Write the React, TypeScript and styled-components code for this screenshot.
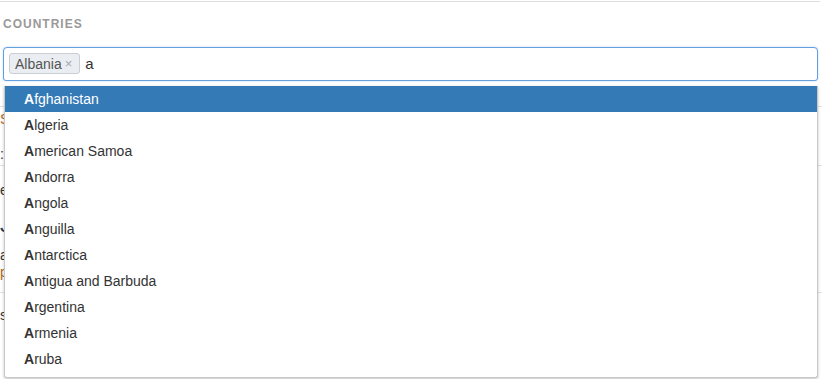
import React from "react";
import styled, { createGlobalStyle } from "styled-components";

const Global = createGlobalStyle`
  html, body { margin: 0; padding: 0; background: #fff; }
  body { font-family: "Liberation Sans", Arial, sans-serif; color: #333; overflow: hidden; }
`;

const Page = styled.div`
  width: 822px;
  height: 379px;
  overflow: hidden;
  position: relative;
`;

const TopRule = styled.div`
  height: 1px;
  margin-top: 1px;
  background: #dedede;
  margin-right: 2px;
`;

const Section = styled.section`
  padding: 0 4px 0 3px;
`;

const Label = styled.div`
  margin-top: 14px;
  font-size: 12px;
  line-height: 16px;
  font-weight: 700;
  letter-spacing: 1px;
  color: #999;
  text-transform: uppercase;
`;

const SelectWrap = styled.div`
  position: relative;
  margin-top: 15px;
`;

const SelectBox = styled.div`
  box-sizing: border-box;
  height: 34px;
  border: 1px solid #64a0dc;
  border-radius: 4px 4px 3px 3px;
  box-shadow: 0 0 2px rgba(88, 151, 251, 0.45);
  display: flex;
  align-items: flex-start;
  gap: 5px;
  padding: 5px 5px 0 5px;
  background: #fff;
`;

const Tag = styled.span`
  box-sizing: border-box;
  height: 21px;
  display: inline-flex;
  align-items: center;
  padding: 0 7px 0 5px;
  background: #eaedf1;
  border: 1px solid #c9ced5;
  border-radius: 3px;
  font-size: 14px;
  color: #555;
`;

const TagRemove = styled.span`
  margin-left: 3px;
  color: #a3a9b1;
  font-size: 13px;
`;

const Typed = styled.span`
  font-size: 15px;
  line-height: 21px;
  color: #333;
`;

const Dropdown = styled.ul`
  position: absolute;
  top: 39px;
  left: 1px;
  right: 0;
  height: 291px;
  margin: 0;
  padding: 0;
  list-style: none;
  background: #fff;
  border: 1px solid #c8c8c8;
  border-top: none;
  border-radius: 0 0 3px 3px;
  box-shadow: 0 1px 3px rgba(0, 0, 0, 0.25);
  z-index: 10;
  overflow: hidden;
`;

const Option = styled.li<{ $active?: boolean }>`
  height: 26px;
  line-height: 26px;
  padding: 0 19px;
  font-size: 14px;
  color: ${(p) => (p.$active ? "#fff" : "#333")};
  background: ${(p) => (p.$active ? "#337ab7" : "transparent")};
  white-space: nowrap;
`;

const Match = styled.b`
  font-weight: 700;
`;

const Behind = styled.div``;

const BehindRule = styled.div<{ $gap: number }>`
  height: 1px;
  background: #e2e2e2;
  margin-top: ${(p) => p.$gap}px;
`;

const BehindText = styled.div<{ $gap: number; $size?: number; $color?: string }>`
  margin-top: ${(p) => p.$gap}px;
  font-size: ${(p) => p.$size ?? 14}px;
  line-height: 1.2;
  color: ${(p) => p.$color ?? "#333"};
  white-space: nowrap;
`;

const countries = [
  "Afghanistan",
  "Algeria",
  "American Samoa",
  "Andorra",
  "Angola",
  "Anguilla",
  "Antarctica",
  "Antigua and Barbuda",
  "Argentina",
  "Armenia",
  "Aruba",
];

export default function App() {
  return (
    <Page>
      <Global />
      <TopRule />
      <Section>
        <Label>Countries</Label>
        <SelectWrap>
          <SelectBox>
            <Tag>
              Albania<TagRemove>×</TagRemove>
            </Tag>
            <Typed>a</Typed>
          </SelectBox>
          <Dropdown>
            {countries.map((c, i) => (
              <Option key={c} $active={i === 0}>
                <Match>{c[0]}</Match>
                {c.slice(1)}
              </Option>
            ))}
          </Dropdown>
        </SelectWrap>
      </Section>
      <Behind>
        <BehindRule $gap={25} />
        <BehindText $gap={4} $color="#b5651d">S</BehindText>
        <BehindText $gap={18}>:</BehindText>
        <BehindRule $gap={2} />
        <BehindText $gap={16}>e</BehindText>
        <BehindText $gap={14} $size={22} $color="#1f3b57">J</BehindText>
        <BehindText $gap={8}>a</BehindText>
        <BehindText $gap={0} $color="#b5651d">p</BehindText>
        <BehindRule $gap={12} />
        <BehindText $gap={14}>s</BehindText>
      </Behind>
    </Page>
  );
}
